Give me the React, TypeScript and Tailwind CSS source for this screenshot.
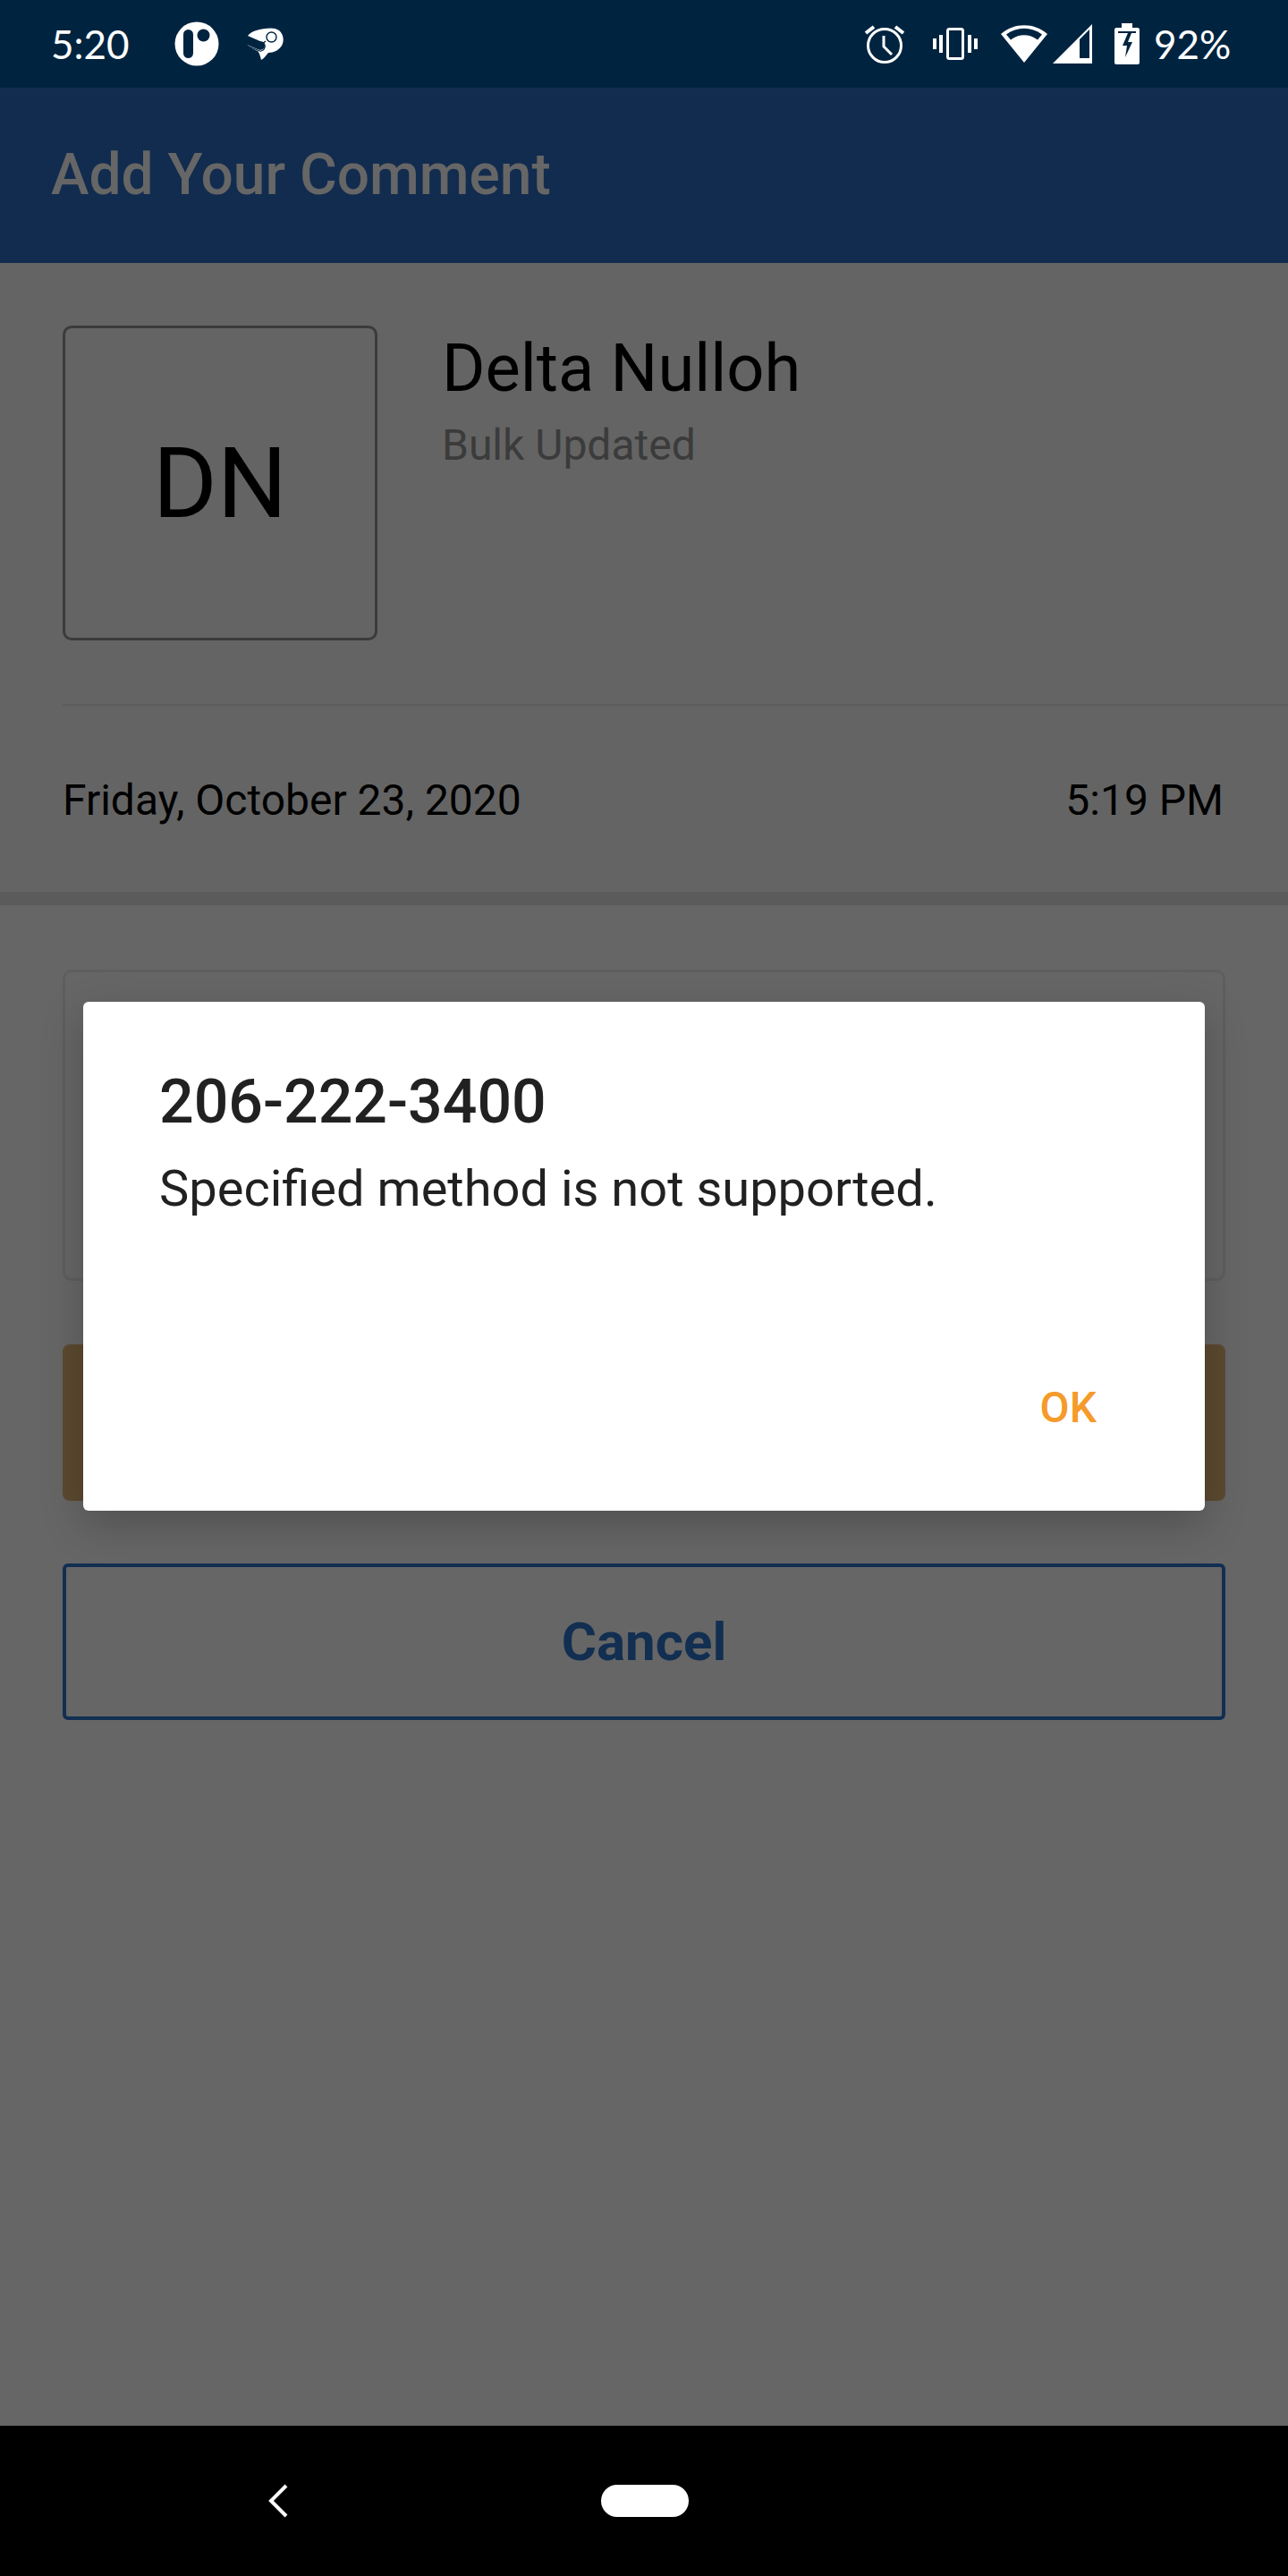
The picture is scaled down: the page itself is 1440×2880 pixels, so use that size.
const roboto = "font-['Roboto',sans-serif]";

const StatusLeft = () => (
  <div className="flex items-center">
    <span className="font-['Lato',sans-serif] text-[44px] leading-none text-white ml-[57px] w-[138px]">5:20</span>
    <svg width="50" height="50" viewBox="0 0 50 50" className="shrink-0">
      <circle cx="25" cy="25" r="24.5" fill="#fff" />
      <rect x="10" y="9" width="11" height="32" rx="5.5" fill="#002440" />
      <circle cx="32.5" cy="15.5" r="7" fill="#002440" />
    </svg>
    <svg width="42" height="36" viewBox="0 0 42 36" className="shrink-0 ml-[31px]">
      <path d="M1 9 C5 4 12 2 20 1 C26 0 32 0 36 3 C41 7 42 15 39 20 C36 25 30 28 24 28 C22 30 20 34 16 36 C15 32 14 28 12 26 C7 24 2 21 0 19 L12 24 C15 26 20 24 20 20 C20 18 19 16 17 16 Z" fill="#fff" />
      <circle cx="27.5" cy="10.5" r="8" fill="#fff" stroke="#002440" strokeWidth="0" />
      <circle cx="27.5" cy="10.5" r="5.5" fill="none" stroke="#002440" strokeWidth="1.4" />
      <path d="M21 15 L17 18" stroke="#002440" strokeWidth="1.5" fill="none" />
      <path d="M0 11 L13 16 C18 15 21 18 20 22 C19 26 15 27 12 25 L0 20 Z" fill="none" stroke="#002440" strokeWidth="1.2" />
    </svg>
  </div>
);

const StatusRight = () => (
  <div className="flex items-center">
    <svg width="46" height="44" viewBox="0 0 46 44" className="shrink-0 mr-[31px]" fill="none" stroke="#fff">
      <circle cx="23" cy="24" r="18.5" strokeWidth="3" />
      <path d="M22 13 V25 L31 34" strokeWidth="3" />
      <path d="M2 10 L11 3 M44 10 L35 3" strokeWidth="4" />
    </svg>
    <svg width="50" height="36" viewBox="0 0 50 36" className="shrink-0 mr-[25px]" fill="none" stroke="#fff">
      <rect x="16.5" y="1.5" width="17" height="33" rx="2" strokeWidth="3" />
      <path d="M9 8 V28 M41 8 V28" strokeWidth="4" />
      <path d="M2 12 V24 M48 12 V24" strokeWidth="4" />
    </svg>
    <svg width="54" height="44" viewBox="0 0 54 44" className="shrink-0 mr-[5px]">
      <path d="M27 43 L1 11 C16 -2 38 -2 53 11 Z" fill="#fff" />
      <path d="M7 11.5 C19 2.5 35 2.5 47 11.5 L42 17.5 C33 10.5 21 10.5 12 17.5 Z" fill="#002440" />
    </svg>
    <svg width="45" height="44" viewBox="0 0 45 44" className="shrink-0 mr-[24px]">
      <path d="M44 0 V44 H0 Z" fill="#fff" />
      <path d="M30 17 L41 6 V38 H30 Z" fill="#002440" />
    </svg>
    <svg width="28" height="46" viewBox="0 0 28 46" className="shrink-0 mr-[16px]">
      <path d="M8 0 H20 V5 H26 C27 5 28 6 28 7 V44 C28 45 27 46 26 46 H2 C1 46 0 45 0 44 V7 C0 6 1 5 2 5 H8 Z" fill="#fff" />
      <path d="M4 9 H24 V11 H4 Z" fill="#002440" />
      <path d="M15 11 L9 25 H14 L12 38 L20 21 H15 L19 11 Z" fill="#002440" />
    </svg>
    <span className="font-['Lato',sans-serif] text-[44px] leading-none text-white w-[93px] mr-[57px]">92%</span>
  </div>
);

export default function App() {
  return (
    <div className={`${roboto} relative w-[1440px] h-[2880px] overflow-hidden flex flex-col bg-[#666666]`}>
      {/* status bar */}
      <div className="h-[98px] bg-[#002440] flex items-center justify-between shrink-0">
        <StatusLeft />
        <StatusRight />
      </div>

      {/* header */}
      <div className="h-[196px] bg-[#122c4f] shrink-0 flex items-center pl-[57px]">
        <h1 className="text-[64px] leading-none font-medium text-[#666666]">Add Your Comment</h1>
      </div>

      {/* contact card */}
      <div className="h-[703px] shrink-0 pl-[70px] pt-[70px] bg-[#646464]">
        <div className="flex h-[352px]">
          <div className="w-[352px] h-[352px] rounded-[10px] border-[3px] border-[#3b3b3b] flex items-center justify-center text-[110px] text-black">
            DN
          </div>
          <div className="ml-[72px] pt-[4px]">
            <div className="text-[74px] leading-[88px] text-black">Delta Nulloh</div>
            <div className="text-[48px] leading-[56px] mt-[14px] text-[#3b3b3b]">Bulk Updated</div>
          </div>
        </div>
        <div className="h-[2px] bg-[#5c5c5c] mt-[71px]" />
        <div className="flex justify-between pr-[72px] mt-[78px] text-[48px] leading-[56px] text-black">
          <span>Friday, October 23, 2020</span>
          <span>5:19 PM</span>
        </div>
      </div>

      <div className="h-[15px] bg-[#5b5b5b] shrink-0" />

      {/* comment form */}
      <div className="flex-1 px-[70px] pt-[72px] bg-[#666666]">
        <div className="h-[348px] rounded-[10px] border-[3px] border-[#5e5e5e]" />
        <div className="h-[175px] rounded-[8px] bg-[#5c4a30] mt-[71px]" />
        <div className="h-[175px] rounded-[6px] border-[4px] border-[#122f52] mt-[70px] flex items-center justify-center text-[60px] font-bold text-[#122f52]">
          Cancel
        </div>
      </div>

      {/* nav bar */}
      <div className="h-[168px] bg-black shrink-0 relative flex items-center">
        <svg width="24" height="38" viewBox="0 0 24 38" fill="none" stroke="#fff" strokeWidth="4" className="ml-[299px] mb-[0px]">
          <path d="M21 2 L4 19 L21 36" />
        </svg>
        <div className="w-[98px] h-[36px] rounded-full bg-white ml-[349px]" />
      </div>

      {/* dialog */}
      <div className="absolute left-[93px] top-[1120px] w-[1254px] h-[569px] bg-white rounded-[6px] shadow-[0_16px_48px_rgba(0,0,0,0.22)] pl-[85px]">
        <div className="pt-[72px] text-[68px] leading-[80px] font-medium text-[#212121]">206-222-3400</div>
        <div className="mt-[24px] text-[56px] leading-[66px] text-[#212121]">Specified method is not supported.</div>
        <div className="absolute right-[121px] bottom-[87px] text-[48px] leading-[56px] font-medium text-[#f59b2b]">OK</div>
      </div>
    </div>
  );
}
